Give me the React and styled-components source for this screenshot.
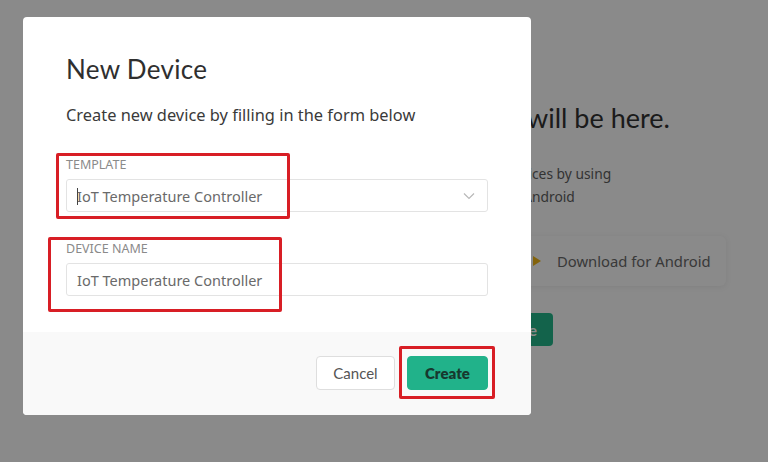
import React from "react";
import styled, { createGlobalStyle } from "styled-components";

const Global = createGlobalStyle`
  html, body { margin: 0; padding: 0; background: #ffffff; }
  body { font-family: "Noto Sans", "Open Sans", sans-serif; }
  * { box-sizing: border-box; }
`;

const Page = styled.div`
  position: relative;
  width: 768px;
  height: 462px;
  overflow: hidden;
  background: #ffffff;
`;

const Behind = styled.div`
  display: flex;
  flex-direction: column;
  align-items: flex-start;
  padding-top: 101px;
`;

const Line = styled.div`
  position: relative;
  white-space: nowrap;
  margin-left: ${(p) => p.$x}px;
  font-family: ${(p) => (p.$big ? '"Lato", sans-serif' : '"Noto Sans", sans-serif')};
  font-size: ${(p) => (p.$big ? "27px" : "13.8px")};
  line-height: ${(p) => (p.$big ? "34px" : "23px")};
  color: ${(p) => (p.$big ? "#333333" : "#5e5e5e")};
  margin-top: ${(p) => p.$mt || 0}px;
`;

const Prefix = styled.span`
  position: absolute;
  right: 100%;
  top: 0;
`;

const DownloadCard = styled.div`
  margin-top: 28px;
  margin-left: 480px;
  display: flex;
  align-items: center;
  gap: 16px;
  height: 50px;
  padding: 0 15px 0 53px;
  background: #ffffff;
  border-radius: 6px;
  box-shadow: 0 1px 6px rgba(0, 0, 0, 0.08);
  font-family: "Noto Sans", sans-serif;
  font-size: 14.8px;
  color: #6a6a6a;
`;

const PlayDot = styled.span`
  width: 0;
  height: 0;
  border-top: 5px solid transparent;
  border-bottom: 5px solid transparent;
  border-left: 8px solid #f2b817;
`;

const BehindButton = styled.div`
  margin-top: 27px;
  margin-left: 423px;
  width: 130px;
  height: 33px;
  padding: 0 16px 0 12px;
  display: flex;
  align-items: center;
  justify-content: flex-end;
  background: #23b88b;
  border-radius: 4px;
  font-family: "Lato", sans-serif;
  font-weight: 700;
  font-size: 16px;
  color: #ffffff;
  white-space: nowrap;
`;

const Overlay = styled.div`
  position: absolute;
  inset: 0;
  background: rgba(0, 0, 0, 0.46);
  padding: 17px 0 0 23px;
`;

const Modal = styled.div`
  position: relative;
  width: 508px;
  height: 398px;
  background: #ffffff;
  border-radius: 4px;
  overflow: hidden;
  display: flex;
  flex-direction: column;
`;

const Body = styled.div`
  flex: 1;
  padding: 38px 43px 0 43px;
  display: flex;
  flex-direction: column;
`;

const Title = styled.h2`
  margin: 0;
  font-family: "Lato", sans-serif;
  font-weight: 400;
  font-size: 26px;
  line-height: 28px;
  color: #2f2f2f;
  letter-spacing: 0.3px;
`;

const Subtitle = styled.p`
  margin: 22px 0 0 0;
  font-family: "Noto Sans", sans-serif;
  font-size: 16.4px;
  line-height: 20px;
  color: #3a3a3a;
`;

const Field = styled.div`
  display: flex;
  flex-direction: column;
  margin-top: ${(p) => p.$mt}px;
`;

const Label = styled.label`
  font-family: "Noto Sans", sans-serif;
  font-size: 12.5px;
  line-height: 14px;
  color: #8a8a8a;
  text-transform: uppercase;
`;

const InputBox = styled.div`
  position: relative;
  margin-top: 7px;
  height: 33px;
  border: 1px solid #e3e3e3;
  border-radius: 3px;
  display: flex;
  align-items: center;
  justify-content: space-between;
  padding: 0 12px 0 10px;
  font-family: "Noto Sans", sans-serif;
  font-size: 14.5px;
  color: #6a6a6a;
`;

const Caret = styled.span`
  position: absolute;
  left: 10px;
  top: 8px;
  width: 1px;
  height: 17px;
  background: #444;
`;

const Footer = styled.div`
  height: 83px;
  background: #f9f9f9;
  display: flex;
  justify-content: flex-end;
  align-items: center;
  gap: 12px;
  padding: 0 43px 1px 43px;
`;

const Button = styled.button`
  height: 34px;
  min-width: ${(p) => (p.$primary ? "81px" : "79px")};
  padding: 0 14px;
  border-radius: 4px;
  border: 1px solid ${(p) => (p.$primary ? "#21b28a" : "#dedede")};
  background: ${(p) => (p.$primary ? "#21b28a" : "#ffffff")};
  color: ${(p) => (p.$primary ? "#17392f" : "#555555")};
  font-family: "Lato", sans-serif;
  font-weight: ${(p) => (p.$primary ? 800 : 400)};
  font-size: 15px;
  cursor: pointer;
`;

const Highlight = styled.div`
  position: absolute;
  left: ${(p) => p.$x}px;
  top: ${(p) => p.$y}px;
  width: ${(p) => p.$w}px;
  height: ${(p) => p.$h}px;
  border: 3px solid #d81e25;
  border-radius: 2px;
  pointer-events: none;
`;

const Chevron = () => (
  <svg width="12" height="8" viewBox="0 0 12 8" fill="none">
    <path d="M1 1.5 L6 6.5 L11 1.5" stroke="#b8b8b8" strokeWidth="1.2" />
  </svg>
);

export default function App() {
  return (
    <>
      <Global />
      <Page>
        <Behind>
          <Line $big $x={527}>
            <Prefix>Devices </Prefix>will be here.
          </Line>
          <Line $x={532} $mt={27}>
            <Prefix>You can add new devi</Prefix>ces by using
          </Line>
          <Line $x={532}>
            <Prefix>Blynk apps for iOS or A</Prefix>ndroid
          </Line>
          <DownloadCard>
            <PlayDot />
            Download for Android
          </DownloadCard>
          <BehindButton>+ New Device</BehindButton>
        </Behind>
        <Overlay>
          <Modal>
            <Body>
              <Title>New Device</Title>
              <Subtitle>Create new device by filling in the form below</Subtitle>
              <Field $mt={33}>
                <Label>Template</Label>
                <InputBox>
                  <Caret />
                  <span>IoT Temperature Controller</span>
                  <Chevron />
                </InputBox>
              </Field>
              <Field $mt={30}>
                <Label>Device Name</Label>
                <InputBox>
                  <span>IoT Temperature Controller</span>
                </InputBox>
              </Field>
            </Body>
            <Footer>
              <Button>Cancel</Button>
              <Button $primary>Create</Button>
            </Footer>
            <Highlight $x={33} $y={136} $w={234} $h={66} />
            <Highlight $x={25} $y={220} $w={234} $h={75} />
            <Highlight $x={376} $y={329} $w={96} $h={53} />
          </Modal>
        </Overlay>
      </Page>
    </>
  );
}
